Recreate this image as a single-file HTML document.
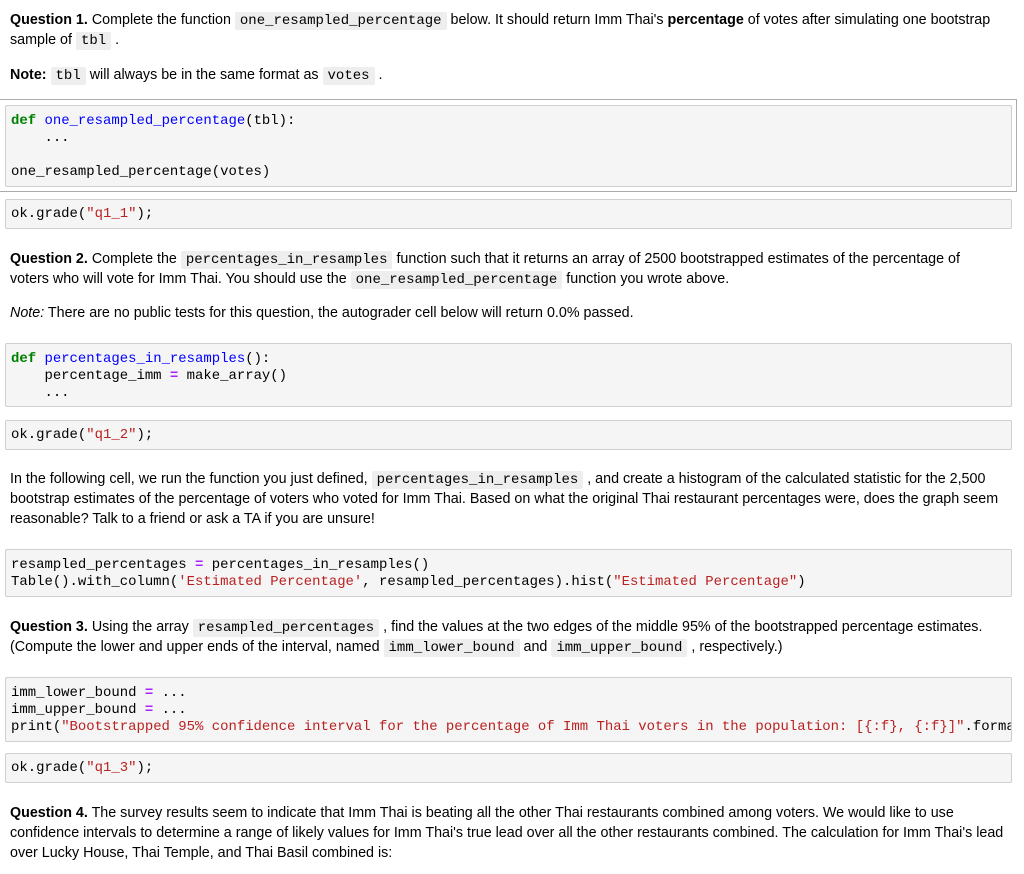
<!DOCTYPE html>
<html><head><meta charset="utf-8"><style>
body{margin:0;width:1024px;height:874px;overflow:hidden;background:#fff;font-family:"Liberation Sans",Helvetica,sans-serif;font-size:14.3px;color:#000;position:relative}
.t{position:absolute;left:10px;white-space:nowrap;line-height:20px}
code,.c{font-family:"Liberation Mono",monospace}
code{background:#eee;padding:1px 5px;border-radius:2px;font-size:14px}
.box{position:absolute;left:5px;width:1005px;background:#f5f5f5;border:1px solid #cfcfcf;border-radius:2px;overflow:hidden}
.c{position:absolute;left:5px;white-space:pre;font-size:13.95px;line-height:17px}
.k{color:#008000;font-weight:bold}.f{color:#0000ff}.s{color:#ba2121}.o{color:#aa22ff;font-weight:bold}
</style></head><body>
<div class="t" style="top:10px"><b>Question 1.</b> Complete the function <code>one_resampled_percentage</code> below. It should return Imm Thai's <b>percentage</b> of votes after simulating one bootstrap</div>
<div class="t" style="top:30px">sample of <code>tbl</code> .</div>
<div class="t" style="top:65px"><b>Note:</b> <code>tbl</code> will always be in the same format as <code>votes</code> .</div>
<div style="position:absolute;left:-1px;top:99px;width:1017px;height:91px;border:1px solid #ababab;border-left:none"></div>
<div class="box" style="top:105px;height:80px"><div class="c" style="top:7px"><span class="k">def</span> <span class="f">one_resampled_percentage</span>(tbl):
    ...

one_resampled_percentage(votes)</div></div>
<div class="box" style="top:199px;height:28px"><div class="c" style="top:6px">ok.grade(<span class="s">"q1_1"</span>);</div></div>

<div class="t" style="top:249px"><b>Question 2.</b> Complete the <code>percentages_in_resamples</code> function such that it returns an array of 2500 bootstrapped estimates of the percentage of</div>
<div class="t" style="top:269px">voters who will vote for Imm Thai. You should use the <code>one_resampled_percentage</code> function you wrote above.</div>
<div class="t" style="top:303px"><i>Note:</i> There are no public tests for this question, the autograder cell below will return 0.0% passed.</div>
<div class="box" style="top:343px;height:62px"><div class="c" style="top:7px"><span class="k">def</span> <span class="f">percentages_in_resamples</span>():
    percentage_imm <span class="o">=</span> make_array()
    ...</div></div>
<div class="box" style="top:420px;height:28px"><div class="c" style="top:6px">ok.grade(<span class="s">"q1_2"</span>);</div></div>

<div class="t" style="top:469px">In the following cell, we run the function you just defined, <code>percentages_in_resamples</code> , and create a histogram of the calculated statistic for the 2,500</div>
<div class="t" style="top:489px">bootstrap estimates of the percentage of voters who voted for Imm Thai. Based on what the original Thai restaurant percentages were, does the graph seem</div>
<div class="t" style="top:509px">reasonable? Talk to a friend or ask a TA if you are unsure!</div>
<div class="box" style="top:549px;height:46px"><div class="c" style="top:7px">resampled_percentages <span class="o">=</span> percentages_in_resamples()
Table().with_column(<span class="s">'Estimated Percentage'</span>, resampled_percentages).hist(<span class="s">"Estimated Percentage"</span>)</div></div>

<div class="t" style="top:617px"><b>Question 3.</b> Using the array <code>resampled_percentages</code> , find the values at the two edges of the middle 95% of the bootstrapped percentage estimates.</div>
<div class="t" style="top:637px">(Compute the lower and upper ends of the interval, named <code>imm_lower_bound</code> and <code>imm_upper_bound</code> , respectively.)</div>
<div class="box" style="top:677px;height:63px"><div class="c" style="top:7px">imm_lower_bound <span class="o">=</span> ...
imm_upper_bound <span class="o">=</span> ...
print(<span class="s">"Bootstrapped 95% confidence interval for the percentage of Imm Thai voters in the population: [{:f}, {:f}]"</span>.format(imm_lower_bound, imm_upper_bound))</div></div>
<div class="box" style="top:753px;height:28px"><div class="c" style="top:6px">ok.grade(<span class="s">"q1_3"</span>);</div></div>

<div class="t" style="top:803px"><b>Question 4.</b> The survey results seem to indicate that Imm Thai is beating all the other Thai restaurants combined among voters. We would like to use</div>
<div class="t" style="top:823px">confidence intervals to determine a range of likely values for Imm Thai's true lead over all the other restaurants combined. The calculation for Imm Thai's lead</div>
<div class="t" style="top:843px">over Lucky House, Thai Temple, and Thai Basil combined is:</div>
</body></html>
